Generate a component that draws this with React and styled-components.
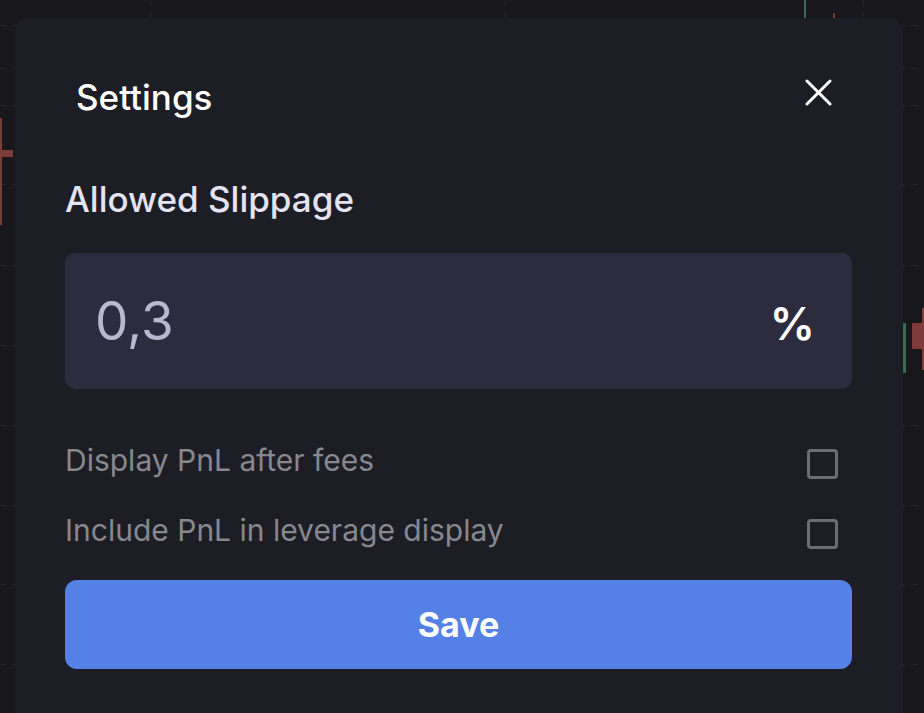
import React, { useState } from "react";
import styled, { createGlobalStyle } from "styled-components";

const GlobalStyle = createGlobalStyle`
  html, body {
    margin: 0;
    padding: 0;
    background: #17171c;
    overflow: hidden;
  }
  body {
    font-family: Inter, "Noto Sans", sans-serif;
  }
`;

const gridRows = [25, 68, 105, 184, 265, 345, 425, 505, 584, 664];
const gridCols = [150, 505, 863];

function ChartBackdrop() {
  return (
    <Backdrop width="924" height="713" viewBox="0 0 924 713">
      {gridRows.map((y) => (
        <line key={"h" + y} x1="0" x2="924" y1={y + 0.5} y2={y + 0.5} stroke="#262631" strokeDasharray="6 6" />
      ))}
      {gridCols.map((x) => (
        <line key={"v" + x} x1={x + 0.5} x2={x + 0.5} y1="0" y2="713" stroke="#262631" strokeDasharray="6 6" />
      ))}
      {/* candles peeking out round the modal */}
      <rect x="0" y="118" width="2" height="107" fill="#7d3c38" />
      <rect x="0" y="150" width="13" height="7" fill="#7d3c38" />
      <rect x="804" y="0" width="2" height="18" fill="#3b6a52" />
      <rect x="833" y="13" width="2" height="5" fill="#7d3c38" />
      <rect x="903" y="323" width="3" height="50" fill="#3b6a52" />
      <rect x="922" y="308" width="2" height="62" fill="#7d3c38" />
      <rect x="912" y="323" width="12" height="26" fill="#7d3c38" />
    </Backdrop>
  );
}

function CloseIcon() {
  return (
    <svg width="27" height="27" viewBox="0 0 27 27" fill="none">
      <path d="M2 2 L25 25 M25 2 L2 25" stroke="#fff" strokeWidth="3" strokeLinecap="round" />
    </svg>
  );
}

function Toggle({ label }) {
  const [on, setOn] = useState(false);
  return (
    <OptionRow>
      <OptionLabel>{label}</OptionLabel>
      <Check $on={on} onClick={() => setOn(!on)} />
    </OptionRow>
  );
}

export default function App() {
  return (
    <>
      <GlobalStyle />
      <Screen>
        <ChartBackdrop />
        <Modal>
          <Header>
            <Title>Settings</Title>
            <CloseButton aria-label="Close">
              <CloseIcon />
            </CloseButton>
          </Header>

          <SectionLabel>Allowed Slippage</SectionLabel>
          <InputBox>
            <Value>0,3</Value>
            <Unit>%</Unit>
          </InputBox>

          <Options>
            <Toggle label="Display PnL after fees" />
            <Toggle label="Include PnL in leverage display" />
          </Options>

          <SaveButton>Save</SaveButton>
        </Modal>
      </Screen>
    </>
  );
}

const Screen = styled.div`
  position: relative;
  width: 924px;
  height: 713px;
  overflow: hidden;
  background: #17171c;
`;

const Backdrop = styled.svg`
  position: absolute;
  inset: 0;
  display: block;
`;

const Modal = styled.div`
  position: relative;
  margin: 18px 0 0 15px;
  width: 888px;
  height: 720px;
  box-sizing: border-box;
  padding: 58px 51px 0 50px;
  background: #1d1d26;
  border-radius: 14px 14px 0 0;
  display: flex;
  flex-direction: column;
`;

const Header = styled.div`
  display: flex;
  align-items: center;
  justify-content: space-between;
  height: 42px;
`;

const Title = styled.h2`
  margin: 0 0 0 11px;
  font-size: 35px;
  line-height: 42px;
  font-weight: 500;
  color: #ffffff;
`;

const CloseButton = styled.button`
  display: flex;
  padding: 0;
  margin: -10px 20px 0 0;
  background: none;
  border: none;
  cursor: pointer;
`;

const SectionLabel = styled.div`
  margin-top: 60px;
  font-size: 35px;
  line-height: 42px;
  font-weight: 500;
  color: #e3e3f1;
`;

const InputBox = styled.div`
  margin-top: 33px;
  height: 136px;
  border-radius: 10px;
  background: #2c2c3e;
  display: flex;
  align-items: center;
  justify-content: space-between;
  padding: 0 37px 0 30px;
`;

const Value = styled.span`
  font-size: 53px;
  font-weight: 400;
  color: #b7b7cf;
`;

const Unit = styled.span`
  font-size: 45px;
  font-weight: 600;
  color: #ffffff;
  margin-top: 4px;
`;

const Options = styled.div`
  margin-top: 38px;
  display: flex;
  flex-direction: column;
`;

const OptionRow = styled.div`
  height: 70px;
  display: flex;
  align-items: center;
  justify-content: space-between;
`;

const OptionLabel = styled.span`
  font-size: 30px;
  line-height: 36px;
  padding-bottom: 4px;
  color: #87878e;
`;

const Check = styled.span`
  width: 31px;
  height: 30px;
  box-sizing: border-box;
  margin: 4px 14px 0 0;
  border: 3px solid #6c6c72;
  border-radius: 4px;
  background: ${(p) => (p.$on ? "#5580e6" : "transparent")};
  cursor: pointer;
`;

const SaveButton = styled.button`
  margin-top: 13px;
  height: 89px;
  border: none;
  border-radius: 12px;
  background: #5580e6;
  color: #ffffff;
  font-family: Inter, "Noto Sans", sans-serif;
  font-size: 34px;
  font-weight: 700;
  cursor: pointer;
`;
